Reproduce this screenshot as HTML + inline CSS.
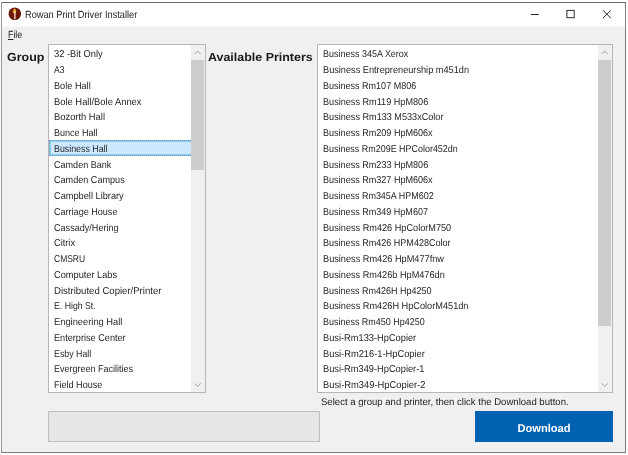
<!DOCTYPE html>
<html lang="en">
<head>
<meta charset="utf-8">
<title>Rowan Print Driver Installer</title>
<style>
html,body{margin:0;padding:0;}
body{width:628px;height:455px;background:#fff;position:relative;overflow:hidden;font-family:"Liberation Sans",sans-serif;color:#222;text-rendering:geometricPrecision;}
.win{filter:blur(.5px);position:absolute;left:1px;top:2px;width:623px;height:449px;border:1px solid #7e7e7e;border-top-color:#6a6a6a;border-left-color:#949494;background:#f0f0f0;}
.abs{position:absolute;}
.titlebar{left:0;top:0;width:623px;height:23px;background:#fff;border-bottom:1px solid #f7f7f7;}
.title{left:23.1px;top:7.4px;font-size:10.4px;line-height:12px;white-space:nowrap;color:#1c1c1c;transform-origin:0 0;transform:scaleX(.888);}
.menubar{left:0;top:24px;width:623px;height:16px;background:#f0f0f0;}
.file{left:6.1px;top:27px;font-size:10.4px;line-height:12px;color:#222;transform-origin:0 0;transform:scaleX(.85);}
.file u{text-decoration:underline;text-underline-offset:1px;}
.lbl{font-weight:bold;font-size:11.7px;line-height:14px;color:#1a1a1a;white-space:nowrap;transform-origin:0 0;}
.list{background:#fff;border:1px solid #b6b6b6;box-sizing:border-box;overflow:hidden;padding-top:.8px;}
.it{height:15.75px;line-height:15.75px;font-size:9.9px;white-space:nowrap;padding-left:5px;color:#262626;box-sizing:border-box;}
.it span{display:inline-block;transform-origin:0 70.8%;position:relative;top:1.5px;}
.it.sel{background:#cce8ff;box-shadow:inset 0 0 0 2px #93cdee;outline:1px dotted #5f9dbe;outline-offset:-1.6px;}
.sb{background:#f0f0f0;width:14px;}
.thumb{background:#cdcdcd;width:13px;left:0;}
.status{font-size:9.8px;line-height:12px;white-space:nowrap;color:#222;transform-origin:0 0;transform:scaleX(.9756);}
.prog{background:#e6e6e6;border:1px solid #c0c0c0;box-sizing:border-box;}
.btn{background:#0063b1;color:#fff;font-weight:bold;font-size:11.3px;text-align:center;}
.btn span{display:inline-block;transform:scaleX(.985);position:relative;top:2.5px;}
</style>
</head>
<body>
<div class="win">
  <div class="abs titlebar"></div>
  <svg class="abs" style="left:6px;top:3.8px" width="14" height="14" viewBox="0 0 14 14">
    <circle cx="6.8" cy="6.8" r="6.3" fill="#6a1808"/>
    <ellipse cx="6.5" cy="4.3" rx="1.6" ry="2.9" fill="#eb9a2c"/>
    <ellipse cx="6.8" cy="5.6" rx="0.9" ry="1.4" fill="#fff0c0"/>
    <rect x="6.1" y="6.5" width="1.5" height="5.6" fill="#f0c8b8"/>
  </svg>
  <div class="abs title">Rowan Print Driver Installer</div>
  <svg class="abs" style="left:520px;top:0" width="100" height="24" viewBox="0 0 100 24" fill="none" stroke="#2a2a2a" stroke-width="1">
    <path d="M8.8 11.500h8"/>
    <rect x="44.9" y="7.400" width="7.300" height="7.300"/>
    <path d="M81 7.300l7.800 7.800M88.8 7.300l-7.800 7.800"/>
  </svg>
  <div class="abs menubar"></div>
  <div class="abs file"><u>F</u>ile</div>

  <div class="abs lbl" style="left:4.6px;top:48px;transform:scaleX(1.065);">Group</div>
  <div class="abs list" style="left:46px;top:41px;width:158px;height:349px;">
<div class="it"><span style="transform:scale(0.944,1)">32 -Bit Only</span></div>
<div class="it"><span style="transform:scale(0.868,1)">A3</span></div>
<div class="it"><span style="transform:scale(0.928,1)">Bole Hall</span></div>
<div class="it"><span style="transform:scale(0.949,1)">Bole Hall/Bole Annex</span></div>
<div class="it"><span style="transform:scale(0.948,1)">Bozorth Hall</span></div>
<div class="it"><span style="transform:scale(0.913,1)">Bunce Hall</span></div>
<div class="it sel"><span style="transform:scale(0.894,1)">Business Hall</span></div>
<div class="it"><span style="transform:scale(0.916,1)">Camden Bank</span></div>
<div class="it"><span style="transform:scale(0.92,1)">Camden Campus</span></div>
<div class="it"><span style="transform:scale(0.934,1)">Campbell Library</span></div>
<div class="it"><span style="transform:scale(0.917,1)">Carriage House</span></div>
<div class="it"><span style="transform:scale(0.919,1)">Cassady/Hering</span></div>
<div class="it"><span style="transform:scale(0.933,1)">Citrix</span></div>
<div class="it"><span style="transform:scale(0.859,1)">CMSRU</span></div>
<div class="it"><span style="transform:scale(0.935,1)">Computer Labs</span></div>
<div class="it"><span style="transform:scale(0.969,1)">Distributed Copier/Printer</span></div>
<div class="it"><span style="transform:scale(0.883,1)">E. High St.</span></div>
<div class="it"><span style="transform:scale(0.944,1)">Engineering Hall</span></div>
<div class="it"><span style="transform:scale(0.926,1)">Enterprise Center</span></div>
<div class="it"><span style="transform:scale(0.894,1)">Esby Hall</span></div>
<div class="it"><span style="transform:scale(0.91,1)">Evergreen Facilities</span></div>
<div class="it"><span style="transform:scale(0.916,1)">Field House</span></div>
    <div class="abs sb" style="right:0;top:0;height:347px;">
      <div class="abs thumb" style="top:15px;height:110px;"></div>
      <svg class="abs" style="left:0;top:0" width="14" height="15" viewBox="0 0 14 15" fill="none" stroke="#a0a0a0" stroke-width="1"><path d="M3.800 9l2.900-2.900l2.900 2.900"/></svg>
      <svg class="abs" style="left:0;bottom:0" width="14" height="15" viewBox="0 0 14 15" fill="none" stroke="#a0a0a0" stroke-width="1"><path d="M3.800 6.500l2.900 2.900l2.900-2.900"/></svg>
    </div>
  </div>

  <div class="abs lbl" style="left:206.2px;top:47.9px;transform:scaleX(1.065);">Available Printers</div>
  <div class="abs list" style="left:315px;top:41px;width:296px;height:349px;">
<div class="it"><span style="transform:scale(0.909,1)">Business 345A Xerox</span></div>
<div class="it"><span style="transform:scale(0.93,1)">Business Entrepreneurship m451dn</span></div>
<div class="it"><span style="transform:scale(0.913,1)">Business Rm107 M806</span></div>
<div class="it"><span style="transform:scale(0.923,1)">Business Rm119 HpM806</span></div>
<div class="it"><span style="transform:scale(0.922,1)">Business Rm133 M533xColor</span></div>
<div class="it"><span style="transform:scale(0.916,1)">Business Rm209 HpM606x</span></div>
<div class="it"><span style="transform:scale(0.906,1)">Business Rm209E HPColor452dn</span></div>
<div class="it"><span style="transform:scale(0.917,1)">Business Rm233 HpM806</span></div>
<div class="it"><span style="transform:scale(0.916,1)">Business Rm327 HpM606x</span></div>
<div class="it"><span style="transform:scale(0.909,1)">Business Rm345A HPM602</span></div>
<div class="it"><span style="transform:scale(0.915,1)">Business Rm349 HpM607</span></div>
<div class="it"><span style="transform:scale(0.927,1)">Business Rm426 HpColorM750</span></div>
<div class="it"><span style="transform:scale(0.915,1)">Business Rm426 HPM428Color</span></div>
<div class="it"><span style="transform:scale(0.93,1)">Business Rm426 HpM477fnw</span></div>
<div class="it"><span style="transform:scale(0.928,1)">Business Rm426b HpM476dn</span></div>
<div class="it"><span style="transform:scale(0.911,1)">Business Rm426H Hp4250</span></div>
<div class="it"><span style="transform:scale(0.93,1)">Business Rm426H HpColorM451dn</span></div>
<div class="it"><span style="transform:scale(0.908,1)">Business Rm450 Hp4250</span></div>
<div class="it"><span style="transform:scale(0.938,1)">Busi-Rm133-HpCopier</span></div>
<div class="it"><span style="transform:scale(0.942,1)">Busi-Rm216-1-HpCopier</span></div>
<div class="it"><span style="transform:scale(0.938,1)">Busi-Rm349-HpCopier-1</span></div>
<div class="it"><span style="transform:scale(0.947,1)">Busi-Rm349-HpCopier-2</span></div>
    <div class="abs sb" style="right:0;top:0;height:347px;">
      <div class="abs thumb" style="top:15px;height:266px;"></div>
      <svg class="abs" style="left:0;top:0" width="14" height="15" viewBox="0 0 14 15" fill="none" stroke="#a0a0a0" stroke-width="1"><path d="M3.800 9l2.900-2.900l2.900 2.900"/></svg>
      <svg class="abs" style="left:0;bottom:0" width="14" height="15" viewBox="0 0 14 15" fill="none" stroke="#a0a0a0" stroke-width="1"><path d="M3.800 6.500l2.900 2.900l2.900-2.900"/></svg>
    </div>
  </div>

  <div class="abs status" style="left:318.9px;top:394.3px;">Select a group and printer, then click the Download button.</div>
  <div class="abs prog" style="left:46px;top:408px;width:272px;height:31px;"></div>
  <div class="abs btn" style="left:473px;top:408px;width:138px;height:31px;line-height:31px;"><span>Download</span></div>
</div>
</body>
</html>
